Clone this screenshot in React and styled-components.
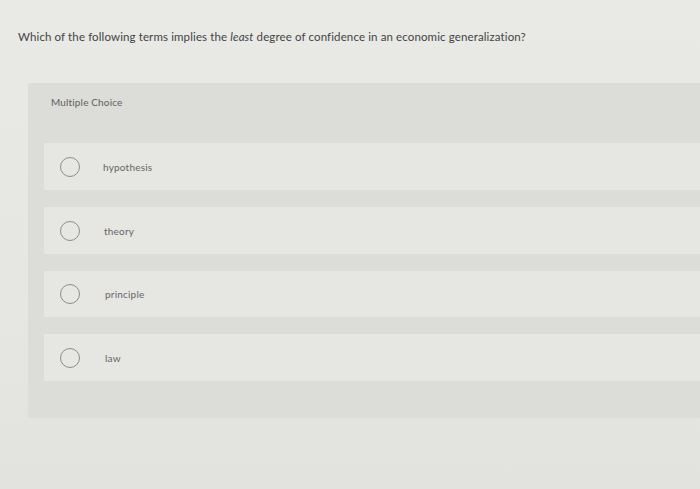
import React from "react";
import styled, { createGlobalStyle } from "styled-components";

const Global = createGlobalStyle`
  html, body { margin: 0; padding: 0; background: #e7e7e3; }
  body { width: 700px; height: 489px; overflow: hidden; font-family: Lato, "Open Sans", sans-serif; }
`;

const Page = styled.div`
  width: 700px;
  height: 489px;
  background: linear-gradient(180deg, #e9e9e6 0%, #e6e6e2 60%, #e2e2de 100%);
  padding-top: 29px;
  box-sizing: border-box;
`;

const Question = styled.p`
  margin: 0 0 0 18px;
  font-size: 11.5px;
  line-height: 16px;
  color: #444;
  letter-spacing: 0.12px;
  em { font-style: italic; }
`;

const Panel = styled.section`
  margin: 38px 0 0 28px;
  background: #dcdcd8;
  padding: 0 0 37px 16px;
  display: flex;
  flex-direction: column;
`;

const Header = styled.div`
  height: 38px;
  display: flex;
  align-items: center;
  padding-left: 7px;
  font-size: 10px;
  letter-spacing: 0.15px;
  color: #606060;
  margin-bottom: 22px;
`;

const List = styled.div`
  display: flex;
  flex-direction: column;
  gap: 17px;
`;

const Row = styled.label`
  height: ${p => p.$h}px;
  display: flex;
  align-items: center;
  background: #e6e6e2;
  padding-left: 16px;
`;

const Radio = styled.span`
  width: 20px;
  height: 20px;
  border-radius: 50%;
  border: 1.5px solid #8c8c8c;
  box-sizing: border-box;
  flex: none;
`;

const Label = styled.span`
  margin-left: ${p => p.$ml}px;
  font-size: 10px;
  letter-spacing: 0.2px;
  color: #666;
`;

const options = [
  { text: "hypothesis", h: 47, ml: 23 },
  { text: "theory", h: 47, ml: 24 },
  { text: "principle", h: 46, ml: 25 },
  { text: "law", h: 47, ml: 25 },
];

export default function App() {
  return (
    <>
      <Global />
      <Page>
        <Question>
          Which of the following terms implies the <em>least</em> degree of confidence in an economic generalization?
        </Question>
        <Panel>
          <Header>Multiple Choice</Header>
          <List>
            {options.map(o => (
              <Row key={o.text} $h={o.h}>
                <Radio />
                <Label $ml={o.ml}>{o.text}</Label>
              </Row>
            ))}
          </List>
        </Panel>
      </Page>
    </>
  );
}
